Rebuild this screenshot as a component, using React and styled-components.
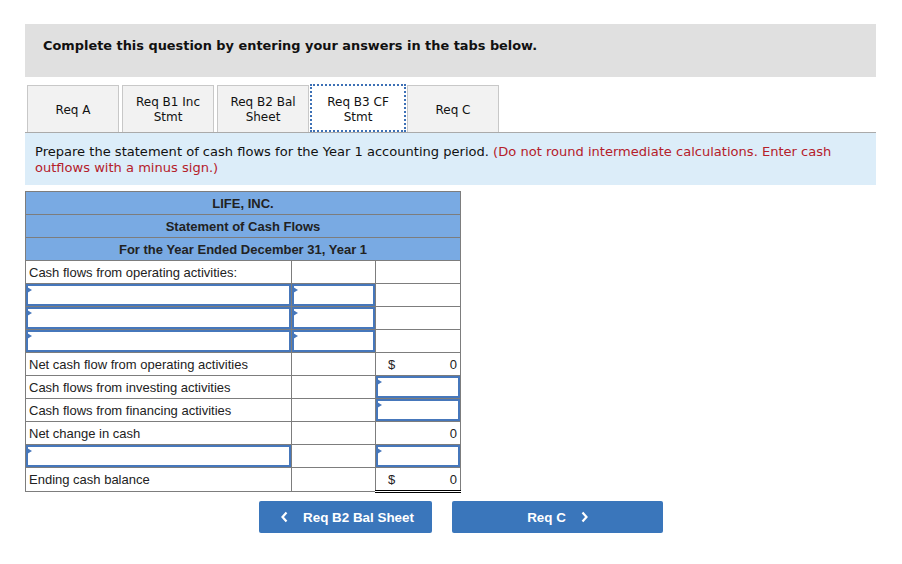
import React from 'react'
import styled, { createGlobalStyle } from 'styled-components'

const GlobalStyle = createGlobalStyle`
  html, body {
    margin: 0;
    padding: 0;
    background: #ffffff;
  }
  body {
    font-family: "DejaVu Sans", Verdana, sans-serif;
    color: #000;
  }
`

const Page = styled.div`
  display: flex;
  flex-direction: column;
  padding: 24px 26px 0 25px;
  width: 902px;
  box-sizing: border-box;
`

const Banner = styled.div`
  background: #e0e0e0;
  height: 53px;
  box-sizing: border-box;
  padding: 14px 0 0 18px;
  font-weight: bold;
  font-size: 12.9px;
  color: #111;
`

const TabBar = styled.div`
  display: flex;
  align-items: flex-end;
  margin-top: 7px;
  padding-left: 2px;
  gap: 3px;
  border-bottom: 1px solid #aaaaaa;
`

const Tab = styled.div`
  box-sizing: border-box;
  width: ${p => (p.$active ? 96 : 92)}px;
  height: ${p => (p.$active ? 48 : 47)}px;
  margin: 0 ${p => (p.$active ? -2 : 0)}px;
  display: flex;
  align-items: center;
  justify-content: center;
  padding-top: ${p => (p.$active ? 3 : 2)}px;
  text-align: center;
  font-size: 12px;
  line-height: 15px;
  color: #111;
  background: ${p => (p.$active ? '#ffffff' : '#f2f2f2')};
  border: ${p => (p.$active ? '2px dotted #3d70b5' : '1px solid #c8c8c8')};
  border-bottom: ${p => (p.$active ? '2px dotted #3d70b5' : 'none')};
  position: relative;
  z-index: ${p => (p.$active ? 1 : 0)};
`

const Instructions = styled.div`
  background: #dcedf9;
  padding: 11px 10px 9px 10px;
  font-size: 13.05px;
  line-height: 16px;
  color: #111;
`

const Red = styled.span`
  color: #b5202a;
`

const Table = styled.table`
  margin-top: 6px;
  border-collapse: collapse;
  width: 435px;
  font-family: "Liberation Sans", Arial, sans-serif;
  font-size: 13px;
  table-layout: fixed;
`

const HeadCell = styled.td`
  background: #79aae3;
  border: 1px solid #7d7d7d;
  height: 22px;
  padding: 0;
  text-align: center;
  font-weight: bold;
  color: #222;
`

const Cell = styled.td`
  border: 1px solid #7d7d7d;
  height: 22px;
  padding: 0 3px;
  color: #222;
  text-align: ${p => p.$align || 'left'};
  border-top: ${p => (p.$rule ? '1px solid #000' : undefined)};
  border-bottom: ${p => (p.$double ? '3px double #000' : undefined)};
`

const InputCell = styled.td`
  border: 1px solid #7d7d7d;
  height: 22px;
  padding: 0;
`

const Input = styled.div`
  position: relative;
  height: 18px;
  border: 2px solid #4677bb;
  &::before {
    content: '';
    position: absolute;
    left: -1px;
    top: 1px;
    border-left: 5px solid #4677bb;
    border-top: 3px solid transparent;
    border-bottom: 3px solid transparent;
  }
`

const Amount = styled.div`
  display: flex;
  justify-content: space-between;
  padding: 0 0 0 9px;
`

const Nav = styled.div`
  display: flex;
  gap: 20px;
  margin: 8px 0 0 234px;
`

const NavButton = styled.div`
  box-sizing: border-box;
  width: ${p => p.$width}px;
  height: 32px;
  padding-left: ${p => p.$shift || 0}px;
  background: #3a76bb;
  border-radius: 2px;
  color: #fff;
  font-family: "Liberation Sans", Arial, sans-serif;
  font-weight: bold;
  font-size: 13.4px;
  display: flex;
  align-items: center;
  justify-content: center;
  gap: 15px;
`

const Chevron = ({ dir }) => (
  <svg width="7" height="12" viewBox="0 0 7 12">
    <path
      d={dir === 'left' ? 'M5.5 1.5 L1.5 6 L5.5 10.5' : 'M1.5 1.5 L5.5 6 L1.5 10.5'}
      fill="none"
      stroke="#fff"
      strokeWidth="2.2"
    />
  </svg>
)

const tabs = [
  ['Req A'],
  ['Req B1 Inc', 'Stmt'],
  ['Req B2 Bal', 'Sheet'],
  ['Req B3 CF', 'Stmt'],
  ['Req C'],
]

export default function App() {
  return (
    <>
      <GlobalStyle />
      <Page>
        <Banner>Complete this question by entering your answers in the tabs below.</Banner>
        <TabBar>
          {tabs.map((t, i) => (
            <Tab key={i} $active={i === 3}>
              <div>
                {t.map((line, j) => (
                  <div key={j}>{line}</div>
                ))}
              </div>
            </Tab>
          ))}
        </TabBar>
        <Instructions>
          Prepare the statement of cash flows for the Year 1 accounting period.{' '}
          <Red>(Do not round intermediate calculations. Enter cash outflows with a minus sign.)</Red>
        </Instructions>
        <Table>
          <colgroup>
            <col style={{ width: 266 }} />
            <col style={{ width: 84 }} />
            <col style={{ width: 85 }} />
          </colgroup>
          <tbody>
            <tr><HeadCell colSpan={3}>LIFE, INC.</HeadCell></tr>
            <tr><HeadCell colSpan={3}>Statement of Cash Flows</HeadCell></tr>
            <tr><HeadCell colSpan={3}>For the Year Ended December 31, Year 1</HeadCell></tr>
            <tr>
              <Cell>Cash flows from operating activities:</Cell>
              <Cell />
              <Cell />
            </tr>
            {[0, 1, 2].map(i => (
              <tr key={i}>
                <InputCell><Input /></InputCell>
                <InputCell><Input /></InputCell>
                <Cell />
              </tr>
            ))}
            <tr>
              <Cell>Net cash flow from operating activities</Cell>
              <Cell $rule />
              <Cell><Amount><span>$</span><span>0</span></Amount></Cell>
            </tr>
            <tr>
              <Cell>Cash flows from investing activities</Cell>
              <Cell />
              <InputCell><Input /></InputCell>
            </tr>
            <tr>
              <Cell>Cash flows from financing activities</Cell>
              <Cell />
              <InputCell><Input /></InputCell>
            </tr>
            <tr>
              <Cell>Net change in cash</Cell>
              <Cell />
              <Cell $align="right" $rule>0</Cell>
            </tr>
            <tr>
              <InputCell><Input /></InputCell>
              <Cell />
              <InputCell><Input /></InputCell>
            </tr>
            <tr>
              <Cell>Ending cash balance</Cell>
              <Cell />
              <Cell $double><Amount><span>$</span><span>0</span></Amount></Cell>
            </tr>
          </tbody>
        </Table>
        <Nav>
          <NavButton $width={173} $shift={4}>
            <Chevron dir="left" />
            <span>Req B2 Bal Sheet</span>
          </NavButton>
          <NavButton $width={211}>
            <span>Req C</span>
            <Chevron dir="right" />
          </NavButton>
        </Nav>
      </Page>
    </>
  )
}
